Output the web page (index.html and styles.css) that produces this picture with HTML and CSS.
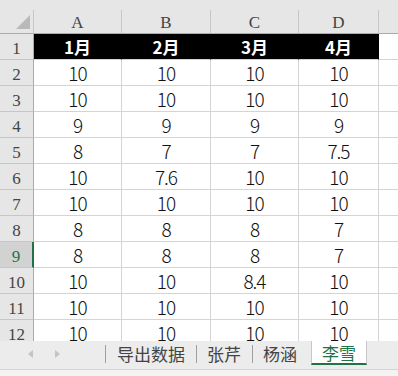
FILE: index.html
```html
<!DOCTYPE html>
<html lang="zh">
<head>
<meta charset="utf-8">
<link rel="stylesheet" href="styles.css">
</head>
<body>
<div class="app">
  <div class="sheet">
    <div class="grid">
      <div class="corner"><span class="tri"></span></div>
      <div class="ch">A</div><div class="ch">B</div><div class="ch">C</div><div class="ch">D</div><div class="ch ch-e"></div>

      <div class="rh">1</div><div class="c hd">1月</div><div class="c hd">2月</div><div class="c hd">3月</div><div class="c hd">4月</div><div class="c e"></div>
      <div class="rh">2</div><div class="c">10</div><div class="c">10</div><div class="c">10</div><div class="c">10</div><div class="c e"></div>
      <div class="rh">3</div><div class="c">10</div><div class="c">10</div><div class="c">10</div><div class="c">10</div><div class="c e"></div>
      <div class="rh">4</div><div class="c">9</div><div class="c">9</div><div class="c">9</div><div class="c">9</div><div class="c e"></div>
      <div class="rh">5</div><div class="c">8</div><div class="c">7</div><div class="c">7</div><div class="c">7.5</div><div class="c e"></div>
      <div class="rh">6</div><div class="c">10</div><div class="c">7.6</div><div class="c">10</div><div class="c">10</div><div class="c e"></div>
      <div class="rh">7</div><div class="c">10</div><div class="c">10</div><div class="c">10</div><div class="c">10</div><div class="c e"></div>
      <div class="rh">8</div><div class="c">8</div><div class="c">8</div><div class="c">8</div><div class="c">7</div><div class="c e"></div>
      <div class="rh sel">9</div><div class="c">8</div><div class="c">8</div><div class="c">8</div><div class="c">7</div><div class="c e"></div>
      <div class="rh">10</div><div class="c">10</div><div class="c">10</div><div class="c">8.4</div><div class="c">10</div><div class="c e"></div>
      <div class="rh">11</div><div class="c">10</div><div class="c">10</div><div class="c">10</div><div class="c">10</div><div class="c e"></div>
      <div class="rh">12</div><div class="c">10</div><div class="c">10</div><div class="c">10</div><div class="c">10</div><div class="c e"></div>
    </div>
  </div>
  <div class="tabbar">
    <div class="nav">
      <span class="arrow left"></span>
      <span class="arrow right"></span>
    </div>
    <div class="tabs">
      <span class="tab">导出数据</span>
      <span class="tab">张芹</span>
      <span class="tab">杨涵</span>
      <span class="tab active">李雪</span>
    </div>
  </div>
  <div class="status"></div>
</div>
</body>
</html>
```
FILE: styles.css
```css
* { box-sizing: border-box; }
html, body { margin: 0; padding: 0; background: #ffffff; }
.app {
  width: 398px;
  height: 376px;
  display: flex;
  flex-direction: column;
  overflow: hidden;
}
.sheet {
  height: 341px;
  flex: none;
  overflow: hidden;
  background: #e6e6e6;
  padding-top: 10px;
}
.grid {
  display: grid;
  grid-template-columns: 34px 88px 89px 88px 80px 19px;
  grid-template-rows: 24px repeat(12, 26px);
}
.corner {
  background: #e6e6e6;
  border-right: 1px solid #c6c6c6;
  border-bottom: 1px solid #ababab;
  position: relative;
}
.tri {
  position: absolute;
  right: 3px;
  bottom: 4px;
  width: 0;
  height: 0;
  border-left: 14px solid transparent;
  border-bottom: 14px solid #b9b9b9;
}
.ch {
  background: #e6e6e6;
  border-right: 1px solid #c6c6c6;
  border-bottom: 1px solid #ababab;
  font-family: "Liberation Serif", "DejaVu Serif", serif;
  font-size: 17px;
  color: #444444;
  display: flex;
  align-items: center;
  justify-content: center;
  padding-top: 2px;
}
.ch-e { border-right: none; }
.rh {
  background: #e6e6e6;
  border-right: 1px solid #ababab;
  border-bottom: 1px solid #c6c6c6;
  font-family: "Liberation Serif", "DejaVu Serif", serif;
  font-size: 17px;
  color: #444444;
  display: flex;
  align-items: center;
  justify-content: center;
  padding-top: 5px;
}
.rh.sel {
  background: #d2d2d2;
  color: #217346;
  border-right: 2px solid #217346;
}
.c {
  background: #ffffff;
  border-right: 1px solid #d4d4d4;
  border-bottom: 1px solid #d4d4d4;
  font-family: "Noto Sans CJK SC", "Noto Sans", sans-serif;
  font-weight: 300;
  font-size: 19px;
  color: #111111;
  display: flex;
  align-items: center;
  justify-content: center;
  letter-spacing: -1px;
}
.c.hd {
  background: #000000;
  color: #ffffff;
  font-weight: 700;
  font-size: 17px;
  letter-spacing: 0;
  border-right-color: #000000;
}
.c.e { border-right: none; }
.tabbar {
  height: 29px;
  flex: none;
  background: #ececec;
  border-bottom: 1px solid #d4d4d4;
  display: flex;
  align-items: stretch;
}
.nav {
  width: 106px;
  display: flex;
  align-items: center;
  gap: 22px;
  padding-left: 28px;
  border-right: 1px solid #9f9f9f;
  margin: 4px 0 6px 0;
}
.arrow {
  width: 0;
  height: 0;
  border-top: 4px solid transparent;
  border-bottom: 4px solid transparent;
}
.arrow.left { border-right: 5px solid #c4c4c4; }
.arrow.right { border-left: 5px solid #c4c4c4; }
.tabs {
  display: flex;
  align-items: stretch;
}
.tab {
  font-family: "Noto Sans CJK SC", sans-serif;
  font-size: 17px;
  color: #444444;
  display: flex;
  align-items: center;
  padding: 0 12px 3px 10px;
  position: relative;
}
.tabs .tab:first-child { padding-left: 11px; }
.tab + .tab::before {
  content: "";
  position: absolute;
  left: -1px;
  top: 4px;
  bottom: 6px;
  border-left: 1px solid #9f9f9f;
}
.tab.active {
  background: #ffffff;
  color: #217346;
  padding: 0 10px 0 10px;
  margin-left: 2px;
  border-left: 1px solid #c6c6c6;
  border-right: 1px solid #c6c6c6;
  border-bottom: 2px solid #217346;
  margin-bottom: 4px;
}
.tab.active::before { display: none; }
.status {
  flex: 1;
  background: #f3f3f3;
}
```
